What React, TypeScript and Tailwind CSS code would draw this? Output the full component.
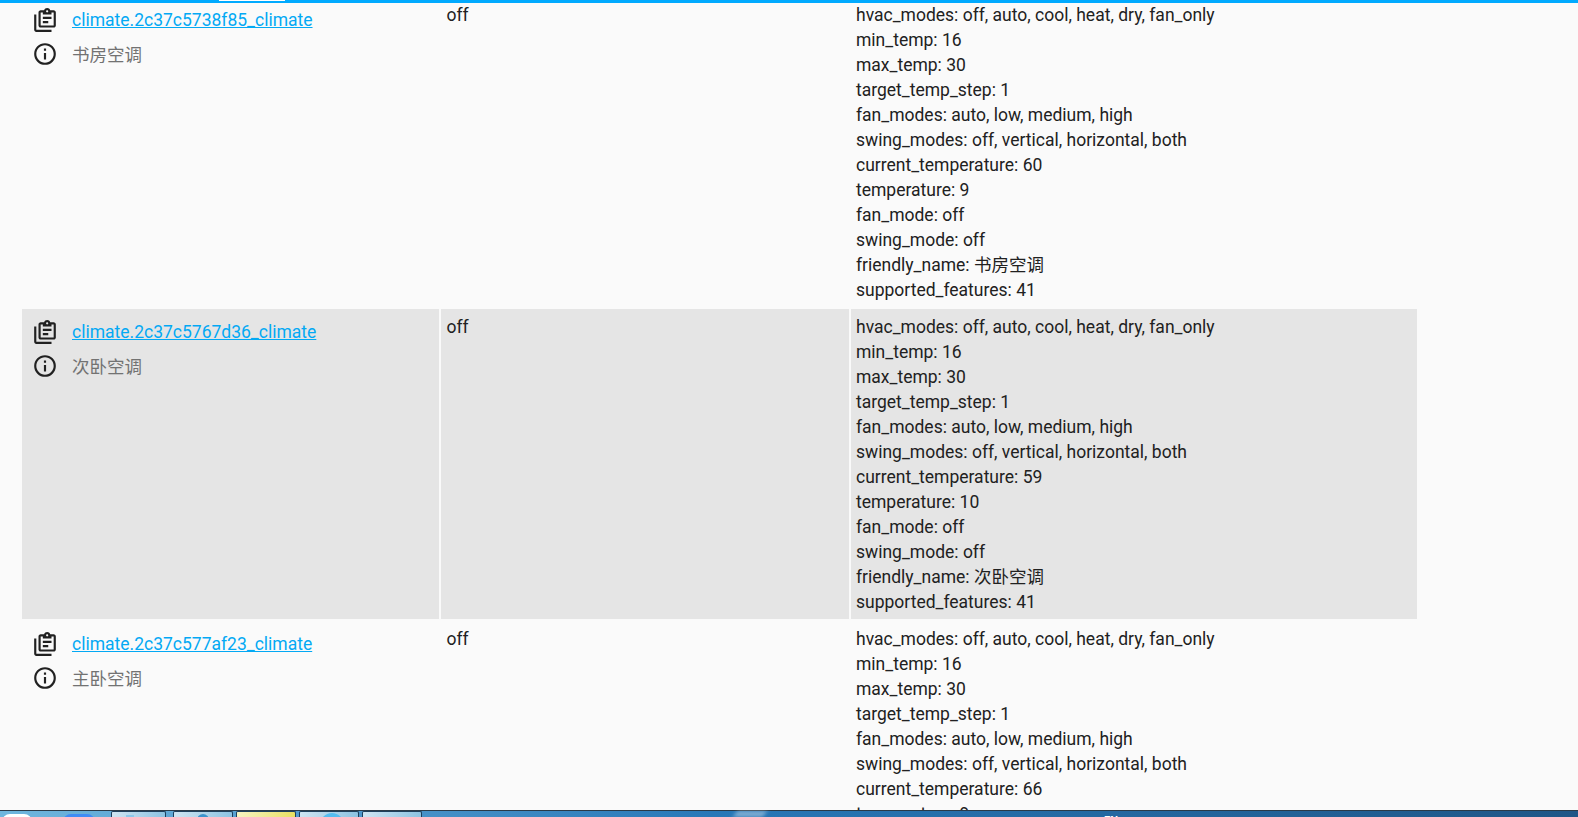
const CLIPBOARD =
  'M4 7V21H18V23H4C2.9 23 2 22.1 2 21V7H4M20 3C21.1 3 22 3.9 22 5V17C22 18.1 21.1 19 20 19H8C6.9 19 6 18.1 6 17V5C6 3.9 6.9 3 8 3H11.18C11.6 1.84 12.7 1 14 1C15.3 1 16.4 1.84 16.82 3H20M14 3C13.45 3 13 3.45 13 4C13 4.55 13.45 5 14 5C14.55 5 15 4.55 15 4C15 3.45 14.55 3 14 3M10 7V5H8V17H20V5H18V7H10M15 15H10V13H15V15M18 11H10V9H18V11Z';
const INFO =
  'M11,9H13V7H11M12,20C7.59,20 4,16.41 4,12C4,7.59 7.59,4 12,4C16.41,4 20,7.59 20,12C20,16.41 16.41,20 12,20M12,2A10,10 0 0,0 2,12A10,10 0 0,0 12,22A10,10 0 0,0 22,12A10,10 0 0,0 12,2M11,17H13V11H11V17Z';

const entities = [
  { id: 'climate.2c37c5738f85_climate', name: '书房空调', current: 60, temp: 9 },
  { id: 'climate.2c37c5767d36_climate', name: '次卧空调', current: 59, temp: 10 },
  { id: 'climate.2c37c577af23_climate', name: '主卧空调', current: 66, temp: 9 },
];

function Icon({ d, className = '' }: { d: string; className?: string }) {
  return (
    <svg className={`w-[26px] h-[26px] shrink-0 fill-[#212121] ${className}`} viewBox="0 0 24 24">
      <path d={d} />
    </svg>
  );
}

function Row({ e, striped }: { e: (typeof entities)[number]; striped: boolean }) {
  const bg = striped ? 'bg-[#e5e5e5]' : '';
  const attrs = [
    'hvac_modes: off, auto, cool, heat, dry, fan_only',
    'min_temp: 16',
    'max_temp: 30',
    'target_temp_step: 1',
    'fan_modes: auto, low, medium, high',
    'swing_modes: off, vertical, horizontal, both',
    `current_temperature: ${e.current}`,
    `temperature: ${e.temp}`,
    'fan_mode: off',
    'swing_mode: off',
    `friendly_name: ${e.name}`,
    'supported_features: 41',
  ];
  return (
    <tr>
      <td className={`${bg} align-top pt-[6px] pb-1 px-1 w-[417px]`}>
        <div className="flex items-center gap-[14px] pl-[6px] pt-[5px] h-[30px]">
          <Icon d={CLIPBOARD} className="-mt-[2px]" />
          <a href="#" className="text-[#03a9f4] underline">
            {e.id}
          </a>
        </div>
        <div className="flex items-center gap-[14px] pl-[6px] mt-[6px] h-[29px]">
          <Icon d={INFO} />
          <span className="pt-1 text-[#727272]">{e.name}</span>
        </div>
      </td>
      <td className={`${bg} align-top pt-[6px] pb-1 pl-[5.5px] pr-1 w-[408px]`}>off</td>
      <td className={`${bg} align-top pt-[6px] pb-1 pl-[5px] pr-1 w-[566px]`}>
        {attrs.map((line) => (
          <div key={line} className="h-[25px]">
            {line}
          </div>
        ))}
      </td>
    </tr>
  );
}

function TaskButton({ className, children }: { className: string; children?: React.ReactNode }) {
  return (
    <div className={`relative h-full overflow-hidden rounded-t-[2px] border border-b-0 border-[#1d3f5c] ${className}`}>
      {children}
    </div>
  );
}

export default function App() {
  return (
    <div
      className="relative h-[817px] overflow-hidden bg-[#fafafa] text-[17.5px] leading-[25px] text-[#212121]"
      style={{ fontFamily: 'Roboto, "Noto Sans CJK SC", sans-serif' }}
    >
      <table className="-mt-[5px] ml-5 table-fixed border-separate border-spacing-[2px]">
        <tbody>
          {entities.map((e, i) => (
            <Row key={e.id} e={e} striped={i === 1} />
          ))}
        </tbody>
      </table>

      {/* app header sliver */}
      <div className="absolute inset-x-0 top-0 h-[3px] bg-[#00aaff]">
        <div className="ml-[219px] h-px w-[66px] bg-white" />
      </div>

      {/* windows taskbar cut off at the bottom */}
      <div className="absolute inset-x-0 bottom-0 flex h-[7px] border-t border-[#2a3a48] bg-gradient-to-r from-[#6fb6de] via-[#2878b8] via-45% to-[#1f5687]">
        <div className="relative w-[111px] shrink-0">
          <div className="absolute left-[2px] top-[3px] h-[8px] w-[30px] rounded-t-full bg-white" />
          <div className="absolute left-[63px] top-[3px] h-[8px] w-[32px] rounded-t-lg bg-[#3f8cf5]" />
        </div>
        <TaskButton className="w-[55px] bg-gradient-to-r from-[#cfe5f2] to-[#8cc3e2]">
          <div className="absolute left-[14px] top-[3px] h-2 w-2 bg-[#8cc8ea]" />
        </TaskButton>
        <TaskButton className="ml-[7px] w-[60px] bg-gradient-to-r from-[#cfe5f2] to-[#8cc3e2]">
          <div className="absolute left-[23px] top-[2px] h-3 w-3 rounded-full bg-[#3b93cc]" />
        </TaskButton>
        <TaskButton className="ml-[3px] w-[60px] bg-gradient-to-r from-[#f7f3c0] to-[#e8e060]" />
        <TaskButton className="ml-[3px] w-[60px] bg-gradient-to-r from-[#cfe5f2] to-[#8cc3e2]">
          <div className="absolute left-[20px] top-[1px] h-6 w-6 rounded-full bg-[#55bdf0]" />
        </TaskButton>
        <TaskButton className="ml-[3px] w-[60px] bg-gradient-to-r from-[#cfe5f2] to-[#8cc3e2]" />
        <div className="pointer-events-none absolute left-[735px] top-0 h-full w-[30px] -skew-x-[30deg] bg-white/40 blur-[2px]" />
        <span className="absolute left-[1104px] top-[4px] text-[11px] font-bold leading-none text-white">EN</span>
      </div>
    </div>
  );
}
